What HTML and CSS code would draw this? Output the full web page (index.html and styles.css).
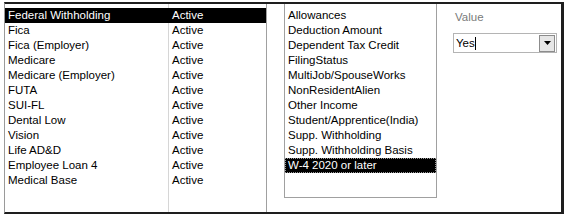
FILE: index.html
```html
<!DOCTYPE html>
<html>
<head>
<meta charset="utf-8">
<link rel="stylesheet" href="styles.css">
</head>
<body>
<div class="frame">
  <div class="list1">
    <div class="row sel"><span class="c1">Federal Withholding</span><span class="c2">Active</span></div>
    <div class="row"><span class="c1">Fica</span><span class="c2">Active</span></div>
    <div class="row"><span class="c1">Fica (Employer)</span><span class="c2">Active</span></div>
    <div class="row"><span class="c1">Medicare</span><span class="c2">Active</span></div>
    <div class="row"><span class="c1">Medicare (Employer)</span><span class="c2">Active</span></div>
    <div class="row"><span class="c1">FUTA</span><span class="c2">Active</span></div>
    <div class="row"><span class="c1">SUI-FL</span><span class="c2">Active</span></div>
    <div class="row"><span class="c1">Dental Low</span><span class="c2">Active</span></div>
    <div class="row"><span class="c1">Vision</span><span class="c2">Active</span></div>
    <div class="row"><span class="c1">Life AD&amp;D</span><span class="c2">Active</span></div>
    <div class="row"><span class="c1">Employee Loan 4</span><span class="c2">Active</span></div>
    <div class="row"><span class="c1">Medical Base</span><span class="c2">Active</span></div>
  </div>
  <div class="list2">
    <div class="item">Allowances</div>
    <div class="item">Deduction Amount</div>
    <div class="item">Dependent Tax Credit</div>
    <div class="item">FilingStatus</div>
    <div class="item">MultiJob/SpouseWorks</div>
    <div class="item">NonResidentAlien</div>
    <div class="item">Other Income</div>
    <div class="item">Student/Apprentice(India)</div>
    <div class="item">Supp. Withholding</div>
    <div class="item">Supp. Withholding Basis</div>
    <div class="item sel">W-4 2020 or later</div>
  </div>
  <div class="valuepanel">
    <div class="label">Value</div>
    <div class="combo">
      <span class="ctext">Yes<span class="caret"></span></span>
      <span class="btn"><svg width="7" height="4" viewBox="0 0 7 4"><path d="M0 0H7L3.5 4Z" fill="#000"/></svg></span>
    </div>
  </div>
</div>
</body>
</html>
```

FILE: styles.css
```css
html, body {
  margin: 0;
  padding: 0;
  background: #fff;
}
body {
  font-family: "Liberation Sans", Arial, sans-serif;
  font-size: 11.5px;
  color: #000;
}
.frame {
  box-sizing: border-box;
  margin: 2px 0 0 4px;
  width: 560px;
  height: 212px;
  border-top: 2px solid #1e1e1e;
  border-right: 3px solid #1e1e1e;
  border-bottom: 2px solid #1e1e1e;
  border-left: 1px solid #9a9a9a;
  display: flex;
  align-items: flex-start;
}
.list1 {
  box-sizing: border-box;
  width: 262px;
  height: 100%;
  padding-top: 4px;
  border-right: 1px solid #a0a0a0;
  background: linear-gradient(#d6d6d6, #d6d6d6) no-repeat 163px 0 / 1px 100%;
}
.row {
  display: grid;
  grid-template-columns: 163px 1fr;
  height: 15px;
  line-height: 15px;
  white-space: nowrap;
}
.c1 { padding-left: 3px; }
.c2 { padding-left: 4px; }
.row.sel {
  background: #000;
  color: #fff;
}
.list2 {
  box-sizing: border-box;
  margin-left: 17px;
  width: 153px;
  height: 194px;
  padding-top: 4px;
  border: 1px solid #a0a0a0;
  border-top: none;
}
.item {
  height: 15px;
  line-height: 15px;
  padding-left: 3px;
  white-space: nowrap;
}
.item.sel {
  background: #000;
  color: #fff;
  outline: 1px dotted #9a9a9a;
  outline-offset: -1px;
}
.valuepanel {
  margin-left: 16px;
  padding-top: 6px;
  display: flex;
  flex-direction: column;
}
.label {
  color: #7a7a7a;
  padding-left: 2px;
  height: 15px;
  line-height: 15px;
}
.combo {
  box-sizing: border-box;
  margin-top: 8px;
  width: 104px;
  height: 20px;
  border: 1px solid #b4b4b4;
  display: flex;
  align-items: center;
  justify-content: space-between;
  padding: 0 1px 0 2px;
}
.ctext {
  display: flex;
  align-items: center;
}
.caret {
  display: inline-block;
  width: 1px;
  height: 13px;
  background: #000;
}
.btn {
  box-sizing: border-box;
  width: 16px;
  height: 17px;
  border: 1px solid #8c8c8c;
  background: #e6e6e6;
  display: flex;
  align-items: center;
  justify-content: center;
}
.btn svg { display: block; }
```
